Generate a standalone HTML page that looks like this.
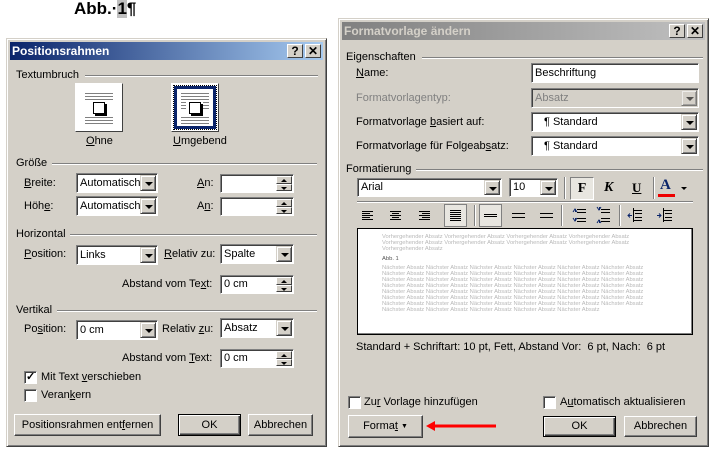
<!DOCTYPE html>
<html><head><meta charset="utf-8"><style>
*{margin:0;padding:0;box-sizing:border-box}
body{width:713px;height:454px;background:#fff;position:relative;overflow:hidden;font-family:"Liberation Sans",sans-serif;font-size:11px;color:#000}
.a{position:absolute;white-space:nowrap}
.dlg{position:absolute;background:#d4d0c8;border:1px solid;border-color:#d4d0c8 #404040 #404040 #d4d0c8;box-shadow:inset 1px 1px #fff,inset -1px -1px #808080}
.tb{position:absolute;left:3px;right:3px;top:3px;height:18px;color:#fff;font-weight:bold;font-size:12px;line-height:18px;padding-left:2px}
.tbtn{position:absolute;top:2px;width:16px;height:14px;background:#d4d0c8;border:1px solid;border-color:#fff #404040 #404040 #fff;color:#000;font-size:12px;line-height:12px;text-align:center;font-weight:bold}
.grp{position:absolute;height:1px;border-top:1px solid #808080;border-bottom:1px solid #fff}
.f{position:absolute;background:#fff;border:1px solid;border-color:#808080 #fff #fff #808080;box-shadow:inset 1px 1px #404040;padding-left:3px;line-height:18px}
.dd{position:absolute;right:1px;top:1px;bottom:1px;width:16px;background:#d4d0c8;border:1px solid;border-color:#d4d0c8 #404040 #404040 #d4d0c8;box-shadow:inset 1px 1px #fff,inset -1px -1px #808080}
.dd:after{content:"";position:absolute;left:4px;top:6px;border-left:4px solid transparent;border-right:4px solid transparent;border-top:4px solid #000}
.sp{position:absolute;right:1px;top:1px;bottom:1px;width:16px}
.sp div{height:50%;background:#d4d0c8;border:1px solid;border-color:#fff #404040 #404040 #fff;position:relative}
.sp div:after{content:"";position:absolute;left:4px;top:2px;border-left:3px solid transparent;border-right:3px solid transparent}
.sp .u:after{border-bottom:3px solid #000}
.sp .d:after{border-top:3px solid #000}
.btn{position:absolute;background:#d4d0c8;border:1px solid;border-color:#fff #404040 #404040 #fff;box-shadow:inset -1px -1px #808080;text-align:center}
.def{border:1px solid #000;box-shadow:inset 1px 1px #fff,inset -1px -1px #404040,inset -2px -2px #808080}
.cb{position:absolute;width:13px;height:13px;background:#fff;border:1px solid;border-color:#808080 #fff #fff #808080;box-shadow:inset 1px 1px #404040}
u{text-decoration:underline}
.pv{position:absolute;font-size:5.8px;color:#b8b8b8;line-height:6px;white-space:nowrap}
.ic{position:absolute;width:48px;height:49px;background:#fff;border:1px solid;border-color:#fff #404040 #404040 #fff}
.ln{position:absolute;left:9px;width:28px;height:1px;background:#808080}
</style></head><body>

<div class="a" style="left:74px;top:-1px;font-size:17px;font-weight:bold">Abb.·<span style="background:#c0c0c0">1</span>¶</div>

<!-- Left dialog -->
<div class="dlg" style="left:6px;top:38px;width:321px;height:409px">
 <div class="tb" style="background:linear-gradient(90deg,#0a246a,#a6caf0)">Positionsrahmen
  <div class="tbtn" style="right:20px">?</div><div class="tbtn" style="right:2px">✕</div></div>
</div>
<div class="a" style="left:16px;top:69px">Textumbruch</div><div class="grp" style="left:85px;top:75px;width:233px"></div>
<div class="ic" style="left:75px;top:83px"><div class="ln" style="top:9px"></div><div class="ln" style="top:12px"></div><div class="ln" style="top:15px"></div><div style="position:absolute;left:17px;top:18px;width:12px;height:12px;border:1px solid #000;box-shadow:2px 2px #000"></div><div class="ln" style="top:33px"></div><div class="ln" style="top:36px"></div><div class="ln" style="top:39px"></div></div>
<div class="a" style="left:86px;top:135px"><u>O</u>hne</div>
<div class="ic" style="left:171px;top:83px"><div style="position:absolute;left:2px;top:2px;right:2px;bottom:2px;border:3px solid #0a246a;outline:1px dotted #000"></div><div class="ln" style="top:9px"></div><div class="ln" style="top:12px"></div><div class="ln" style="top:15px"></div><div class="ln" style="top:18px;width:5px"></div><div class="ln" style="top:21px;width:5px"></div><div class="ln" style="top:24px;width:5px"></div><div class="ln" style="top:18px;left:31px;width:6px"></div><div class="ln" style="top:21px;left:31px;width:6px"></div><div class="ln" style="top:24px;left:31px;width:6px"></div><div style="position:absolute;left:17px;top:18px;width:12px;height:12px;border:1px solid #000;box-shadow:2px 2px #000;background:#fff"></div><div class="ln" style="top:33px"></div><div class="ln" style="top:36px"></div><div class="ln" style="top:39px"></div></div>
<div class="a" style="left:173px;top:135px"><u>U</u>mgebend</div>

<div class="a" style="left:16px;top:157px">Größe</div><div class="grp" style="left:52px;top:163px;width:265px"></div>
<div class="a" style="left:24px;top:177px"><u>B</u>reite:</div>
<div class="f" style="left:76px;top:173px;width:82px;height:20px">Automatisch<div class="dd"></div></div>
<div class="a" style="left:197px;top:177px"><u>A</u>n:</div>
<div class="f" style="left:220px;top:174px;width:74px;height:19px"><div class="sp"><div class="u"></div><div class="d"></div></div></div>
<div class="a" style="left:24px;top:200px">Höh<u>e</u>:</div>
<div class="f" style="left:76px;top:196px;width:82px;height:20px">Automatisch<div class="dd"></div></div>
<div class="a" style="left:197px;top:200px">A<u>n</u>:</div>
<div class="f" style="left:220px;top:197px;width:74px;height:19px"><div class="sp"><div class="u"></div><div class="d"></div></div></div>

<div class="a" style="left:16px;top:228px">Horizontal</div><div class="grp" style="left:70px;top:234px;width:247px"></div>
<div class="a" style="left:24px;top:248px"><u>P</u>osition:</div>
<div class="f" style="left:76px;top:245px;width:82px;height:20px">Links<div class="dd"></div></div>
<div class="a" style="left:164px;top:248px"><u>R</u>elativ zu:</div>
<div class="f" style="left:220px;top:244px;width:74px;height:20px">Spalte<div class="dd"></div></div>
<div class="a" style="left:122px;top:278px">Abstand vom Te<u>x</u>t:</div>
<div class="f" style="left:220px;top:275px;width:74px;height:19px;line-height:17px">0 cm<div class="sp"><div class="u"></div><div class="d"></div></div></div>

<div class="a" style="left:16px;top:304px">Vertikal</div><div class="grp" style="left:57px;top:310px;width:260px"></div>
<div class="a" style="left:24px;top:323px">Po<u>s</u>ition:</div>
<div class="f" style="left:76px;top:320px;width:82px;height:20px">0 cm<div class="dd"></div></div>
<div class="a" style="left:162px;top:323px">Relativ <u>z</u>u:</div>
<div class="f" style="left:220px;top:318px;width:74px;height:20px">Absatz<div class="dd"></div></div>
<div class="a" style="left:122px;top:352px">Abstand vom <u>T</u>ext:</div>
<div class="f" style="left:220px;top:349px;width:74px;height:19px;line-height:17px">0 cm<div class="sp"><div class="u"></div><div class="d"></div></div></div>
<div class="cb" style="left:24px;top:371px"><span style="position:absolute;left:1px;top:-2px;font-size:11px;font-weight:bold">✓</span></div>
<div class="a" style="left:41px;top:371px">Mit Text <u>v</u>erschieben</div>
<div class="cb" style="left:24px;top:389px"></div>
<div class="a" style="left:41px;top:389px">Veran<u>k</u>ern</div>
<div class="btn" style="left:14px;top:414px;width:147px;height:22px;line-height:20px">Positionsrahmen ent<u>f</u>ernen</div>
<div class="btn def" style="left:178px;top:414px;width:63px;height:22px;line-height:20px">OK</div>
<div class="btn" style="left:248px;top:414px;width:65px;height:22px;line-height:20px">Abbrechen</div>

<!-- Right dialog -->
<div class="dlg" style="left:338px;top:18px;width:371px;height:429px">
 <div class="tb" style="background:linear-gradient(90deg,#808080,#c0c0c0);color:#d4d0c8">Formatvorlage ändern
  <div class="tbtn" style="right:20px">?</div><div class="tbtn" style="right:2px">✕</div></div>
</div>
<div class="a" style="left:346px;top:51px">Eigenschaften</div><div class="grp" style="left:422px;top:57px;width:281px"></div>
<div class="a" style="left:356px;top:67px"><u>N</u>ame:</div>
<div class="f" style="left:531px;top:63px;width:168px;height:20px">Beschriftung</div>
<div class="a" style="left:356px;top:92px;color:#808080">Formatvorlagentyp:</div>
<div class="f" style="left:531px;top:88px;width:168px;height:20px;background:#d4d0c8;color:#808080">Absatz<div class="dd" style="opacity:.6"></div></div>
<div class="a" style="left:356px;top:116px">Formatvorlage <u>b</u>asiert auf:</div>
<div class="f" style="left:531px;top:112px;width:168px;height:20px;padding-left:12px">¶ Standard<div class="dd"></div></div>
<div class="a" style="left:356px;top:140px">Formatvorlage für Folgeab<u>s</u>atz:</div>
<div class="f" style="left:531px;top:136px;width:168px;height:20px;padding-left:12px">¶ Standard<div class="dd"></div></div>
<div class="a" style="left:346px;top:163px">Formatierung</div><div class="grp" style="left:416px;top:169px;width:287px"></div>
<div class="f" style="left:357px;top:178px;width:145px;height:19px;line-height:17px">Arial<div class="dd"></div></div>
<div class="f" style="left:509px;top:178px;width:49px;height:19px;line-height:17px">10<div class="dd"></div></div>
<div class="a" style="left:564px;top:177px;width:2px;height:22px;border-left:1px solid #808080;border-right:1px solid #fff"></div>
<div class="a" style="left:570px;top:177px;width:24px;height:23px;border:1px solid;border-color:#808080 #fff #fff #808080;background:#e8e6e0;font:bold 14px 'Liberation Serif',serif;text-align:center;line-height:21px">F</div>
<div class="a" style="left:604px;top:180px;font:italic bold 14px 'Liberation Serif',serif">K</div>
<div class="a" style="left:632px;top:180px;font:bold 13px 'Liberation Serif',serif;text-decoration:underline">U</div>
<div class="a" style="left:653px;top:177px;width:2px;height:22px;border-left:1px solid #808080;border-right:1px solid #fff"></div>
<div class="a" style="left:660px;top:177px;font:bold 15px 'Liberation Serif',serif;color:#0a246a">A</div>
<div class="a" style="left:658px;top:194px;width:17px;height:3px;background:#e00"></div>
<div class="a" style="left:681px;top:187px;border-left:3px solid transparent;border-right:3px solid transparent;border-top:3px solid #000"></div>
<div class="grp" style="left:357px;top:201px;width:336px"></div>
<svg class="a" style="left:357px;top:204px" width="340" height="24" viewBox="0 0 340 24" stroke="#000" stroke-width="1" fill="none">
 <path d="M5 7.5h11M5 9.5h8M5 11.5h11M5 13.5h8M5 15.5h11"/>
 <path d="M33 7.5h11M35 9.5h7M33 11.5h11M35 13.5h7M33 15.5h11"/>
 <path d="M62 7.5h11M65 9.5h8M62 11.5h11M65 13.5h8M62 15.5h11"/>
 <rect x="87.5" y="0.5" width="22" height="22" fill="#e8e6e0" stroke="#808080"/>
 <path d="M93 6.5h11M93 8.5h11M93 10.5h11M93 12.5h11M93 14.5h11M93 16.5h11"/>
 <path d="M117.5 1v21" stroke="#808080"/><path d="M118.5 1v21" stroke="#fff"/>
 <rect x="122.5" y="0.5" width="22" height="22" fill="#e8e6e0" stroke="#808080"/>
 <path d="M127 10.5h13M127 12.5h13M155 9.5h13M155 13.5h13M183 9.5h13M183 13.5h13"/>
 <path d="M204.5 1v21" stroke="#808080"/><path d="M205.5 1v21" stroke="#fff"/>
 <path d="M220 5.5h9M220 8.5h9M220 14.5h9M220 17.5h9M244 5.5h9M244 8.5h9M244 14.5h9M244 17.5h9"/>
 <path d="M216 8l2-3 2 3M218.5 5v3M216 14l2 3 2-3M218.5 14v3M240 3l2 3 2-3M242.5 3v3M240 19l2-3 2 3M242.5 16v3" stroke="#0a246a"/>
 <path d="M262.5 1v21" stroke="#808080"/><path d="M263.5 1v21" stroke="#fff"/>
 <path d="M276 6.5h9M278 9.5h7M278 13.5h7M276 16.5h9M306 6.5h9M308 9.5h7M308 13.5h7M306 16.5h9M276.5 4v14M306.5 4v14"/>
 <path d="M275 11.5h-4M273 9.5l-2 2 2 2M300 11.5h4M302 9.5l2 2-2 2" stroke="#0a246a"/>
</svg>
<div class="a" style="left:357px;top:228px;width:336px;height:107px;background:#fff;border:1px solid #000;box-shadow:inset -1px -1px #808080"></div>
<div class="pv" style="left:382px;top:234px">Vorhergehender Absatz Vorhergehender Absatz Vorhergehender Absatz Vorhergehender Absatz<br>Vorhergehender Absatz Vorhergehender Absatz Vorhergehender Absatz Vorhergehender Absatz<br>Vorhergehender Absatz</div>
<div class="pv" style="left:382px;top:256px;color:#555">Abb. 1</div>
<div class="pv" style="left:382px;top:265px">Nächster Absatz Nächster Absatz Nächster Absatz Nächster Absatz Nächster Absatz Nächster Absatz<br>Nächster Absatz Nächster Absatz Nächster Absatz Nächster Absatz Nächster Absatz Nächster Absatz<br>Nächster Absatz Nächster Absatz Nächster Absatz Nächster Absatz Nächster Absatz Nächster Absatz<br>Nächster Absatz Nächster Absatz Nächster Absatz Nächster Absatz Nächster Absatz Nächster Absatz<br>Nächster Absatz Nächster Absatz Nächster Absatz Nächster Absatz Nächster Absatz Nächster Absatz<br>Nächster Absatz Nächster Absatz Nächster Absatz Nächster Absatz Nächster Absatz Nächster Absatz<br>Nächster Absatz Nächster Absatz Nächster Absatz Nächster Absatz Nächster Absatz Nächster Absatz<br>Nächster Absatz Nächster Absatz Nächster Absatz Nächster Absatz Nächster Absatz</div>
<div class="a" style="left:356px;top:341px">Standard + Schriftart: 10 pt, Fett, Abstand Vor:&nbsp; 6 pt, Nach:&nbsp; 6 pt</div>
<div class="cb" style="left:348px;top:396px"></div>
<div class="a" style="left:364px;top:396px">Zu<u>r</u> Vorlage hinzufügen</div>
<div class="cb" style="left:543px;top:396px"></div>
<div class="a" style="left:560px;top:396px">A<u>u</u>tomatisch aktualisieren</div>
<div class="btn" style="left:348px;top:415px;width:75px;height:23px;line-height:21px">Forma<u>t</u> <span style="font-size:7px;vertical-align:1px">▼</span></div>
<svg class="a" style="left:424px;top:420px" width="74" height="12"><path d="M6 6H72" stroke="#f00" stroke-width="3"/><path d="M2 6l9-5v10z" fill="#f00"/></svg>
<div class="btn def" style="left:543px;top:416px;width:73px;height:21px;line-height:19px">OK</div>
<div class="btn" style="left:624px;top:416px;width:73px;height:21px;line-height:19px">Abbrechen</div>
</body></html>
